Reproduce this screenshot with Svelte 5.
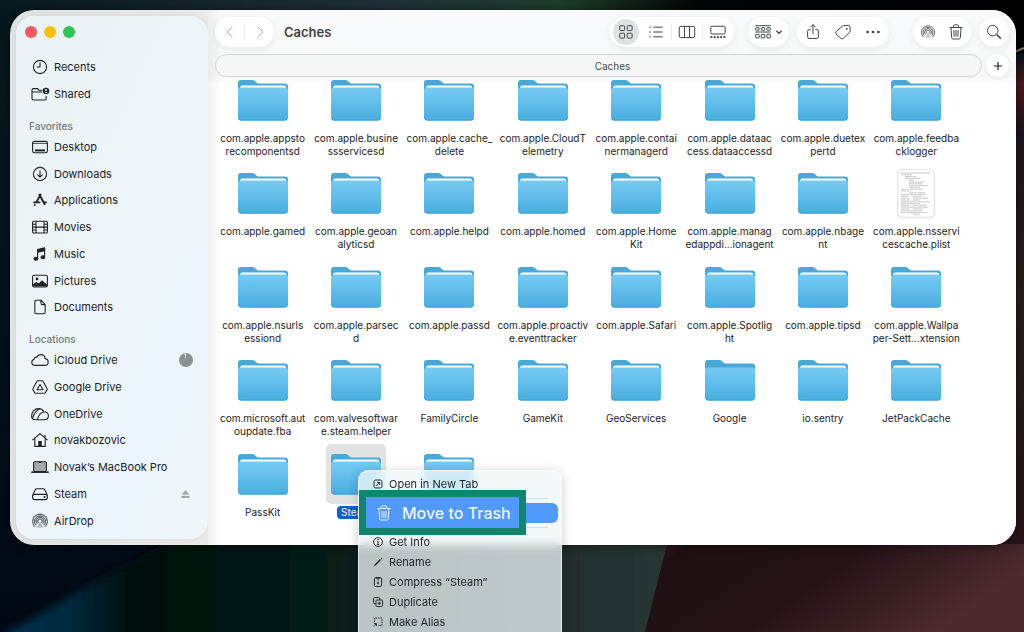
<script>
  const sections = [
    {
      title: "",
      items: [
        { icon: "clock", label: "Recents" },
        { icon: "shared", label: "Shared" },
      ],
    },
    {
      title: "Favorites",
      items: [
        { icon: "desktop", label: "Desktop" },
        { icon: "download", label: "Downloads" },
        { icon: "apps", label: "Applications" },
        { icon: "film", label: "Movies" },
        { icon: "music", label: "Music" },
        { icon: "picture", label: "Pictures" },
        { icon: "document", label: "Documents" },
      ],
    },
    {
      title: "Locations",
      items: [
        { icon: "cloud", label: "iCloud Drive", extra: "progress" },
        { icon: "gdrive", label: "Google Drive" },
        { icon: "onedrive", label: "OneDrive" },
        { icon: "home", label: "novakbozovic" },
        { icon: "laptop", label: "Novak’s MacBook Pro" },
        { icon: "disk", label: "Steam", extra: "eject" },
        { icon: "airdrop", label: "AirDrop" },
      ],
    },
  ];

  // \n marks where Finder breaks a long name
  const names = [
    "com.apple.appsto\nrecomponentsd",
    "com.apple.busine\nssservicesd",
    "com.apple.cache_\ndelete",
    "com.apple.CloudT\nelemetry",
    "com.apple.contai\nnermanagerd",
    "com.apple.dataac\ncess.dataaccessd",
    "com.apple.duetex\npertd",
    "com.apple.feedba\ncklogger",
    "com.apple.gamed",
    "com.apple.geoan\nalyticsd",
    "com.apple.helpd",
    "com.apple.homed",
    "com.apple.Home\nKit",
    "com.apple.manag\nedappdi...ionagent",
    "com.apple.nbage\nnt",
    "com.apple.nsservi\ncescache.plist",
    "com.apple.nsurls\nessiond",
    "com.apple.parsec\nd",
    "com.apple.passd",
    "com.apple.proactiv\ne.eventtracker",
    "com.apple.Safari",
    "com.apple.Spotlig\nht",
    "com.apple.tipsd",
    "com.apple.Wallpa\nper-Sett...xtension",
    "com.microsoft.aut\noupdate.fba",
    "com.valvesoftwar\ne.steam.helper",
    "FamilyCircle",
    "GameKit",
    "GeoServices",
    "Google",
    "io.sentry",
    "JetPackCache",
    "PassKit",
    "Steam",
    "",
  ];

  const menu = [
    { icon: "newtab", label: "Open in New Tab" },
    null,
    { active: true },
    null,
    { icon: "info", label: "Get Info" },
    { icon: "pencil", label: "Rename" },
    { icon: "zip", label: "Compress “Steam”" },
    { icon: "duplicate", label: "Duplicate" },
    { icon: "alias", label: "Make Alias" },
  ];

  // all icons are drawn on a 20x20 canvas
  const icons = {
    clock: '<circle cx="10" cy="10" r="6.6"/><path d="M10 5.6V10H6.8"/>',
    shared:
      '<path d="M12.2 6.2H9L7.6 4.6H3.6Q2 4.6 2 6.2V14.6Q2 16 3.6 16H14.6Q16.2 16 16.2 14.4V12M2 8H12"/><circle cx="16" cy="7" r="3.3" fill="currentColor" stroke="none"/><circle cx="16" cy="6" r="1" fill="#fff" stroke="none"/><path d="M14.4 8.9Q16 7 17.6 8.9Z" fill="#fff" stroke="none"/>',
    desktop:
      '<rect x="2.6" y="4.4" width="14.8" height="11.4" rx="1.8"/><path d="M3 6.4H17" stroke-width=".8"/><path d="M5 13.4H15" stroke-width="2"/>',
    download: '<circle cx="10" cy="10" r="6.6"/><path d="M10 6.4V13M7.4 10.6L10 13.2L12.6 10.6"/>',
    apps:
      '<g stroke-width="1.9"><path d="M9 4L15 14.8M11 4L6.2 12.4"/><path d="M3.4 12.4H10.4M13.4 12.4H16.8"/><path d="M5.2 14.2L4.4 15.6"/></g>',
    film:
      '<rect x="2.6" y="4.2" width="14.8" height="11.8" rx="1.2"/><path d="M6 4.2V16M14 4.2V16M6 10.1H14M2.6 7.2H6M2.6 10.1H6M2.6 13H6M14 7.2H17.4M14 10.1H17.4M14 13H17.4"/>',
    music:
      '<path d="M7.6 14.4V6.2L14.6 4.4V12.8"/><path d="M7.6 5.6L14.6 3.9V6.6L7.6 8.3Z" fill="currentColor"/><ellipse cx="5.9" cy="14.8" rx="1.9" ry="1.5" fill="currentColor"/><ellipse cx="12.9" cy="13.2" rx="1.9" ry="1.5" fill="currentColor"/>',
    picture:
      '<rect x="2.6" y="4.2" width="14.8" height="11.8" rx="1.6"/><circle cx="7" cy="8" r="1.4" fill="currentColor" stroke="none"/><path d="M3 15.6V13.4L6.4 10.8L8.6 12.4L12 9.2L17 13.4V15.6Z" fill="currentColor" stroke="none"/>',
    document: '<path d="M11 3.2H6.6Q4.8 3.2 4.8 5V15Q4.8 16.8 6.6 16.8H13.4Q15.2 16.8 15.2 15V7.6L11 3.2V6.2Q11 7.6 12.4 7.6H15.2"/>',
    cloud:
      '<path d="M5.4 15.4C3.2 15.4 1.8 14 1.8 12.2C1.8 10.6 2.8 9.6 4.2 9.2C4.2 7.6 5.6 6.8 6.8 7.2C7.6 5.4 9 4.6 10.8 4.6C13.2 4.6 15 6.4 15.2 8.6C17 8.8 18.2 10.2 18.2 12C18.2 14 16.8 15.4 14.8 15.4Z"/>',
    gdrive:
      '<path d="M8 3.8H12Q12.8 3.8 13.2 4.6L17 11.4Q17.4 12.2 17 12.9L15.4 15.5Q15 16.2 14.2 16.2H5.8Q5 16.2 4.6 15.5L3 12.9Q2.6 12.2 3 11.4L6.8 4.6Q7.2 3.8 8 3.8Z"/><path d="M10 7.6L13 12.8H7Z"/>',
    onedrive:
      '<path d="M5.6 15.8C3.2 15.8 1.6 14.2 1.6 12C1.6 8 4.4 4.6 8.6 4.6C11 4.6 13 5.8 14 7.8C16.6 8 18.4 9.6 18.4 11.8C18.4 14.2 16.8 15.8 14.4 15.8Z"/><path d="M2.6 14C4.2 9.4 6.4 6.4 9.6 4.8M7.4 15.6C8.6 11 11 8.4 14 7.8"/>',
    home: '<path d="M2.4 10.2L10 3.6L17.6 10.2M4.8 8.6V16.4H15.2V8.6M15 4.8V7.4"/><rect x="8.2" y="11" width="3.6" height="5.4" fill="currentColor" stroke="none"/>',
    laptop: '<rect x="3.6" y="4.8" width="12.8" height="9.8" rx="1" fill="#a4a9ab"/><path d="M1.2 15.2H18.8" stroke-width="1.5"/><path d="M9 5.4H11"/>',
    disk: '<path d="M2.8 11.2L5.2 5.8Q5.7 4.8 6.8 4.8H13.2Q14.3 4.8 14.8 5.8L17.2 11.2"/><rect x="2.6" y="10.4" width="14.8" height="5.2" rx="2"/><circle cx="14.6" cy="13" r=".5" fill="currentColor"/>',
    airdrop:
      '<g stroke-width=".9"><path d="M5 15.7A7.3 7.3 0 1 1 15 15.7"/><path d="M6.1 14.2A5.5 5.5 0 1 1 13.9 14.2"/><path d="M7.3 12.8A3.8 3.8 0 1 1 12.7 12.8"/><path d="M8.6 11.6A2.1 2.1 0 1 1 11.4 11.6"/></g><path d="M10 10.4L6.8 16.4H13.2Z" fill="currentColor" stroke="none" opacity=".3"/>',
    back: '<path d="M12.4 4.6L6.8 10L12.4 15.4"/>',
    forward: '<path d="M7.6 4.6L13.2 10L7.6 15.4"/>',
    grid: '<rect x="3" y="3" width="5.4" height="5.4" rx="1"/><rect x="11.4" y="3" width="5.4" height="5.4" rx="1"/><rect x="3" y="11.4" width="5.4" height="5.4" rx="1"/><rect x="11.4" y="11.4" width="5.4" height="5.4" rx="1"/>',
    list: '<path d="M7 4.6H17.4M7 10H17.4M7 15.4H17.4"/><path d="M2.6 4.6H4M2.6 10H4M2.6 15.4H4" stroke-width="1.6"/>',
    columns: '<rect x="1.4" y="3.8" width="17.2" height="12.4" rx="1.8"/><path d="M7.2 3.8V16.2M12.8 3.8V16.2"/>',
    gallery: '<rect x="2" y="3.6" width="16" height="8.6" rx="1.6"/><path d="M1.6 15.6H18.4" stroke-width="2" stroke-dasharray="2.2 1.4"/>',
    group:
      '<path d="M1.4 3H18.6M1.4 10H18.6"/><rect x="1.9" y="5.2" width="3.8" height="2.8" rx=".6"/><rect x="8.1" y="5.2" width="3.8" height="2.8" rx=".6"/><rect x="14.3" y="5.2" width="3.8" height="2.8" rx=".6"/><rect x="1.9" y="12.6" width="3.8" height="4" rx=".6"/><rect x="8.1" y="12.6" width="3.8" height="4" rx=".6"/><rect x="14.3" y="12.6" width="3.8" height="4" rx=".6"/>',
    share: '<path d="M7.4 7.4H5.8Q4 7.4 4 9.2V15.4Q4 17.2 5.8 17.2H14.2Q16 17.2 16 15.4V9.2Q16 7.4 14.2 7.4H12.6M10 12.4V1.8M7 4.8L10 1.8L13 4.8"/>',
    tag: '<path d="M10.6 3L16 2.6Q17.4 2.6 17.6 4L18 8.4Q18 9.6 17.2 10.4L10.4 17Q9 18.2 7.6 17L2.4 12.2Q1.2 10.8 2.4 9.4L9 3.8Q9.8 3.1 10.6 3Z"/><circle cx="14.2" cy="6.6" r=".6" fill="currentColor"/>',
    dots: '<g fill="currentColor" stroke="none"><circle cx="4" cy="10" r="1.5"/><circle cx="10" cy="10" r="1.5"/><circle cx="16" cy="10" r="1.5"/></g>',
    trash:
      '<path d="M2.8 5H17.2M7.2 4.8V3.4Q7.2 2 8.6 2H11.4Q12.8 2 12.8 3.4V4.8M4.4 5.2L5.2 16.2Q5.3 17.8 6.8 17.8H13.2Q14.7 17.8 14.8 16.2L15.6 5.2M7.6 7.8L7.9 15.2M10 7.8V15.2M12.4 7.8L12.1 15.2"/>',
    search: '<circle cx="8.6" cy="8.4" r="5.8"/><path d="M13 12.8L17.6 17.4" stroke-width="1.7"/>',
    plus: '<path d="M10 3.2V16.8M3.2 10H16.8"/>',
    newtab: '<rect x="3.4" y="3.4" width="13.2" height="13.2" rx="2.6"/><path d="M7 13L12.4 7.6M8.4 7.2H12.8V11.6"/>',
    info: '<circle cx="10" cy="10" r="7.4"/><path d="M10 9V14.2M8.6 9H10M8.4 14.2H11.6"/><circle cx="10" cy="6.2" r=".6" fill="currentColor"/>',
    pencil: '<path d="M4.8 15.4L14.2 6" stroke-width="2.4"/><path d="M15.2 5L16.4 3.8" stroke-width="2.4"/><path d="M3 17.2L4.8 15.4"/>',
    zip: '<rect x="4" y="3" width="12" height="14.4" rx="1.6"/><path d="M6.4 3H13.6" stroke-width="2.4"/><path d="M10 5V12" stroke-dasharray="1.6 1"/><path d="M10 11V13.6" stroke-width="2.4"/>',
    duplicate: '<path d="M6.4 13H4.6Q2.6 13 2.6 11V4.6Q2.6 2.6 4.6 2.6H11Q13 2.6 13 4.6V6.4"/><rect x="6.6" y="6.6" width="11" height="11" rx="2"/><path d="M12.1 9.4V14.8M9.4 12.1H14.8"/>',
    alias: '<path d="M4 10V3.4H16.6V16H10" stroke-dasharray="2.6 1.6"/><path d="M2.6 17.4L7 13M3.6 12.6H7.4V16.4"/>',
  };

  let selected = $state("Steam");
  let view = $state("grid");
</script>

{#snippet icon(name)}
  <svg class="icon" viewBox="0 0 20 20" aria-hidden="true">{@html icons[name]}</svg>
{/snippet}

{#snippet folder(full)}
  <svg class="thumb" viewBox="0 0 60 60" aria-hidden="true">
    <path d="M5 13Q5 10 8 10H19Q21 10 22.4 11.4L23.4 12.4Q24.4 13.4 26 13.4H52Q55 13.4 55 16.4V30H5Z" fill="#48a9d8" />
    {#if !full}
      <path d="M7 19Q7 15.6 9.4 15.6H50.6Q53.4 15.6 53.4 19V24H7Z" fill="#fff" />
    {/if}
    <path d="M5 20.4Q5 17.6 8 17.6H52Q55 17.6 55 20.4V47.6Q55 50.6 52 50.6H8Q5 50.6 5 47.6Z" fill="url(#front)" />
    <path d="M6 49Q6.8 50.2 8.4 50.2H51.6Q53.2 50.2 54 49" fill="none" stroke="#3a9ccb" stroke-width=".8" />
  </svg>
{/snippet}

{#snippet plist()}
  <svg class="thumb" viewBox="0 0 60 60" aria-hidden="true">
    <rect x="11.8" y="6.8" width="36.6" height="48" rx="4" fill="none" stroke="#efefef" stroke-width="2" />
    <rect x="12" y="6.6" width="36.2" height="47.4" rx="4" fill="#fff" stroke="#dcdcdc" stroke-width=".7" />
    <g stroke="#b0b0b0" stroke-width=".7" stroke-dasharray="5 .4 3 .3 7 .4">
      <path d="M15 10H44M15 11.8H26M19 13.6H30M19 15.4H34M23 17.2H28M23 19H38M23 20.8H36M23 22.6H42M23 24.4H34" />
      <path d="M15 26.2H22M23 26.2H37M15 28H25M23 29.8H40M15 31.6H40M15 33.4H22M27 33.4H36M15 35.2H24M27 35.2H42" />
      <path d="M15 37H24M27 37H34M15 38.8H44M15 40.6H34M15 42.4H24M27 42.4H40M15 44.2H42M15 46H24M27 46H38M15 47.8H36M15 49.6H42M27 51.2H34" />
    </g>
  </svg>
{/snippet}

<svg class="defs" width="0" height="0" aria-hidden="true">
  <linearGradient id="front" x1="0" y1="0" x2="0" y2="1">
    <stop offset="0" stop-color="#76cbf3" />
    <stop offset="1" stop-color="#49ade0" />
  </linearGradient>
</svg>

<main class="desktop">
  <svg class="wallpaper" viewBox="0 0 1024 632" preserveAspectRatio="none" aria-hidden="true">
    <defs>
      <linearGradient id="top">
        <stop offset="0" stop-color="#06191e" />
        <stop offset=".38" stop-color="#21323a" />
        <stop offset=".55" stop-color="#1f3e2d" />
        <stop offset=".68" stop-color="#020604" />
        <stop offset="1" stop-color="#000" />
      </linearGradient>
      <linearGradient id="left" x1="0" y1="0" x2="0" y2="1">
        <stop offset="0" stop-color="#06191e" />
        <stop offset=".5" stop-color="#03131b" />
        <stop offset="1" stop-color="#010814" />
      </linearGradient>
      <linearGradient id="ground" gradientUnits="userSpaceOnUse" x1="20" y1="0" x2="670" y2="0">
        <stop offset="0" stop-color="#05304b" />
        <stop offset=".08" stop-color="#05293d" />
        <stop offset=".17" stop-color="#020f0d" />
        <stop offset=".45" stop-color="#051b17" />
        <stop offset=".83" stop-color="#202e2d" />
        <stop offset="1" stop-color="#263635" />
      </linearGradient>
      <linearGradient id="wine" x1="0" y1="0" x2="1" y2=".35">
        <stop offset="0" stop-color="#4b1421" />
        <stop offset=".06" stop-color="#3f1420" />
        <stop offset=".12" stop-color="#1f0f13" />
        <stop offset=".55" stop-color="#251316" />
        <stop offset="1" stop-color="#4d2a2e" />
      </linearGradient>
      <linearGradient id="side" x1="0" y1="0" x2="0" y2="1">
        <stop offset="0" stop-color="#04161b" />
        <stop offset=".06" stop-color="#4a1820" />
        <stop offset=".16" stop-color="#20141c" />
        <stop offset=".5" stop-color="#2c1d1d" />
        <stop offset="1" stop-color="#271316" />
      </linearGradient>
      <filter id="soft">
        <feGaussianBlur stdDeviation="4" />
      </filter>
    </defs>
    <rect width="1024" height="60" fill="url(#top)" />
    <rect y="10" width="200" height="622" fill="url(#left)" />
    <path d="M187 530H680V660H-40Z" fill="url(#ground)" filter="url(#soft)" />
    <path d="M668 540H1024V632H645Z" fill="url(#wine)" />
    <rect x="1000" y="54" width="24" height="490" fill="url(#side)" />
    <path d="M1010 54L1024 48" stroke="#7b7a6a" stroke-width="2" />
  </svg>

  <section class="window" aria-label="Caches">
    <aside class="sidebar">
      <div class="lights">
        <button class="red" aria-label="Close"></button>
        <button class="yellow" aria-label="Minimize"></button>
        <button class="green" aria-label="Zoom"></button>
      </div>
      <nav>
        {#each sections as section}
          <div class="section" style:flex-grow={section.items.length}>
            {#if section.title}<h2>{section.title}</h2>{/if}
            <ul>
              {#each section.items as item}
                <li>
                  <a href="#{item.icon}">
                    {@render icon(item.icon)}
                    <span>{item.label}</span>
                    {#if item.extra === "progress"}
                      <svg class="extra" viewBox="0 0 16 16" aria-hidden="true">
                        <circle cx="8" cy="8" r="7" fill="#8b9193" />
                        <path d="M8 8V1.6A6.4 6.4 0 0 0 6.6 1.8Z" fill="#fff" />
                      </svg>
                    {:else if item.extra === "eject"}
                      <svg class="extra" viewBox="0 0 16 16" aria-hidden="true">
                        <path d="M7.5 4L11.5 8.8H3.5ZM3.5 10H11.5V12H3.5Z" fill="#a3a9ab" />
                      </svg>
                    {/if}
                  </a>
                </li>
              {/each}
            </ul>
          </div>
        {/each}
      </nav>
    </aside>

    <div class="content">
      <header class="toolbar">
        <div class="pill history">
          <button aria-label="Back">{@render icon("back")}</button>
          <i></i>
          <button aria-label="Forward">{@render icon("forward")}</button>
        </div>
        <h1>Caches</h1>
        <div class="pill views">
          <button class:on={view === "grid"} aria-label="Icons" onclick={() => (view = "grid")}>{@render icon("grid")}</button>
          <button class:on={view === "list"} aria-label="List" onclick={() => (view = "list")}>{@render icon("list")}</button>
          <i></i>
          <button class:on={view === "columns"} aria-label="Columns" onclick={() => (view = "columns")}>{@render icon("columns")}</button>
          <i></i>
          <button class:on={view === "gallery"} aria-label="Gallery" onclick={() => (view = "gallery")}>{@render icon("gallery")}</button>
        </div>
        <div class="pill">
          <button class="group" aria-label="Group">
            {@render icon("group")}
            <svg class="chevron" viewBox="0 0 8 8" aria-hidden="true"><path d="M1.4 2.8L4 5.4L6.6 2.8" /></svg>
          </button>
        </div>
        <div class="pill actions">
          <button aria-label="Share">{@render icon("share")}</button>
          <button aria-label="Tags">{@render icon("tag")}</button>
          <button aria-label="More">{@render icon("dots")}</button>
        </div>
        <div class="pill pair">
          <button aria-label="AirDrop">{@render icon("airdrop")}</button>
          <button aria-label="Trash">{@render icon("trash")}</button>
        </div>
        <div class="pill round">
          <button aria-label="Search">{@render icon("search")}</button>
        </div>
      </header>

      <div class="tabs">
        <button class="tab">Caches</button>
        <button class="add" aria-label="New tab">{@render icon("plus")}</button>
      </div>

      <div class="files">
        {#each names as name}
          <button class="file" class:selected={selected === name} onclick={() => (selected = name)}>
            <span class="frame">
              {#if name.endsWith(".plist")}
                {@render plist()}
              {:else}
                {@render folder(name === "Google")}
              {/if}
            </span>
            <span class="name">{name}</span>
          </button>
        {/each}
      </div>
    </div>
  </section>

  <div class="menu">
    {#each menu as entry}
      {#if entry?.active}
        <div class="entry active"></div>
      {:else if entry}
        <button class="entry">
          {@render icon(entry.icon)}
          <span>{entry.label}</span>
        </button>
      {:else}
        <hr />
      {/if}
    {/each}
  </div>

  <!-- label of the active entry, enlarged -->
  <button class="callout">
    {@render icon("trash")}
    <span>Move to Trash</span>
  </button>
</main>

<style>
  :global(body) {
    margin: 0;
    background: #06191e;
  }

  .desktop {
    position: relative;
    display: flex;
    box-sizing: border-box;
    min-height: 100vh;
    padding: 10px 8px 87px 10px;
    overflow: hidden;
    font-family: Inter, "Liberation Sans", sans-serif;
    font-size: 11px;
    color: #1d2326;
  }

  .desktop * {
    box-sizing: border-box;
  }

  .defs {
    position: absolute;
  }

  .wallpaper {
    position: absolute;
    inset: 0;
    width: 100%;
    height: 100%;
  }

  button {
    margin: 0;
    padding: 0;
    border: 0;
    background: none;
    font: inherit;
    color: inherit;
  }

  .icon {
    flex: none;
    width: 20px;
    height: 20px;
    fill: none;
    stroke: currentColor;
    stroke-width: 1.1;
    stroke-linejoin: round;
  }

  .window {
    position: relative;
    display: flex;
    flex: 1;
    min-width: 0;
    padding: 6px 0 6px 6px;
    border-radius: 24px;
    background: linear-gradient(90deg, #e3e4e5 0, #ececec 208px, #fff 240px);
    box-shadow: 0 0 12px rgba(0, 0, 0, 0.5);
  }

  /* sidebar */
  .sidebar {
    display: flex;
    flex: none;
    flex-direction: column;
    width: 192px;
    padding-bottom: 5px;
    border-radius: 18px;
    background: linear-gradient(115deg, #e9f2f5, #eef5f8 45%, #ebf5fc 75%, #eff6f8);
    box-shadow: 0 0 8px rgba(0, 0, 0, 0.08);
  }

  .lights {
    display: flex;
    gap: 7px;
    height: 38px;
    padding: 10px 9px;
  }

  .lights button {
    width: 12px;
    height: 12px;
    border-radius: 50%;
  }

  .red {
    background: #fb5560;
  }

  .yellow {
    background: #fac104;
  }

  .green {
    background: #2fc454;
  }

  nav {
    display: flex;
    flex: 1;
    flex-direction: column;
  }

  .section {
    display: flex;
    flex-direction: column;
  }

  h2 {
    height: 26px;
    margin: 0;
    padding: 12px 13px 0;
    font-size: 10px;
    font-weight: 500;
    line-height: 13px;
    color: #737b7f;
  }

  ul {
    display: grid;
    flex: 1;
    grid-auto-rows: minmax(26px, 1fr);
    margin: 0;
    padding: 0;
    list-style: none;
  }

  li a {
    display: flex;
    align-items: center;
    gap: 4px;
    height: 100%;
    padding: 0 14px;
    color: inherit;
    text-decoration: none;
  }

  li span {
    flex: 1;
    white-space: nowrap;
  }

  .extra {
    width: 16px;
    height: 16px;
  }

  /* toolbar */
  .content {
    display: flex;
    flex: 1;
    flex-direction: column;
    min-width: 0;
    margin: -6px 0;
    border-radius: 0 24px 24px 0;
    background:
      linear-gradient(90deg, rgba(0, 0, 0, 0.05), rgba(0, 0, 0, 0) 14px),
      linear-gradient(#f9fbfc, #f7f7f7 66px, #fff 74px);
  }

  .toolbar {
    display: flex;
    align-items: center;
    gap: 8px;
    padding: 7px 7px 0;
    color: #3f4346;
  }

  h1 {
    flex: 1;
    margin: 0;
    padding-left: 2px;
    font-size: 13px;
    font-weight: 600;
  }

  .pill {
    display: flex;
    align-items: center;
    height: 30px;
    padding: 0 1px;
    border-radius: 15px;
    background: #fff;
    box-shadow: 0 2px 8px rgba(0, 0, 0, 0.07);
  }

  .pill button {
    display: flex;
    align-items: center;
    justify-content: center;
    width: 30px;
    height: 26px;
    border-radius: 13px;
  }

  .pill .icon {
    width: 18px;
    height: 18px;
  }

  .pill i {
    width: 1px;
    height: 16px;
    background: #e9e9e9;
  }

  .pill .on {
    width: 26px;
    margin: 0 2px;
    background: #e0e1e2;
  }

  .history {
    padding: 0;
    color: #a9acae;
  }

  .history button {
    width: 29px;
  }

  .views {
    margin-right: 6px;
  }

  .actions {
    margin-right: 16px;
  }

  .pill .group {
    gap: 3px;
    width: 39px;
  }

  .chevron {
    width: 8px;
    height: 8px;
    fill: none;
    stroke: currentColor;
    stroke-width: 1.3;
  }

  .pair button {
    width: 28px;
  }

  .round {
    padding: 0;
  }

  .tabs {
    display: flex;
    gap: 4px;
    padding: 7px 7px 0;
  }

  .tab {
    flex: 1;
    height: 23px;
    padding-left: 28px;
    border: 1px solid #d3d4d5;
    border-radius: 12px;
    background: #f6f6f6;
    font-size: 10px;
    color: #4b4e50;
  }

  .add {
    display: flex;
    align-items: center;
    justify-content: center;
    width: 23px;
    height: 23px;
    border-radius: 12px;
    background: #fff;
    box-shadow: 0 1px 5px rgba(0, 0, 0, 0.08);
  }

  .add .icon {
    width: 12px;
    height: 12px;
    stroke-width: 2;
  }

  /* icon view, its first row slides up under the tab bar */
  .files {
    display: grid;
    flex: 1;
    grid-template-columns: repeat(8, minmax(0, 1fr));
    grid-auto-rows: minmax(92px, 1fr);
    margin-top: -7px;
    padding: 0 53px 8px 8px;
  }

  .file {
    display: flex;
    flex-direction: column;
    align-items: center;
    gap: 2px;
  }

  .frame {
    width: 60px;
    height: 60px;
    border-radius: 5px;
  }

  .thumb {
    display: block;
    width: 60px;
    height: 60px;
  }

  .name {
    padding: 0 4px;
    border-radius: 4px;
    font-size: 10px;
    line-height: 13px;
    white-space: pre;
  }

  .selected .frame {
    background: #e1e2e2;
  }

  .selected .name {
    background: #0a5fd6;
    color: #fff;
  }

  /* context menu */
  .menu {
    position: absolute;
    top: 470px;
    left: 358px;
    width: 204px;
    padding: 3px 3px 12px;
    border: 1px solid rgba(255, 255, 255, 0.6);
    border-radius: 10px;
    background: rgba(240, 247, 250, 0.77);
    box-shadow: 0 2px 12px rgba(0, 0, 0, 0.2);
    backdrop-filter: blur(5px);
  }

  .entry {
    display: flex;
    align-items: center;
    gap: 5px;
    width: 100%;
    height: 20px;
    padding: 0 10px;
    border-radius: 6px;
  }

  .entry .icon {
    width: 12px;
    height: 12px;
    stroke-width: 1.6;
  }

  .entry.active {
    background: #5199fb;
  }

  hr {
    height: 1px;
    margin: 4px 10px;
    border: 0;
    background: #d5dee1;
  }

  .callout {
    position: absolute;
    top: 490px;
    left: 359px;
    display: flex;
    align-items: center;
    gap: 9px;
    width: 167px;
    height: 45px;
    padding: 0 9px;
    border: 7px solid #10866c;
    background: #5199fb;
    font-size: 16px;
    font-weight: 500;
    color: #eef5ff;
    white-space: nowrap;
  }

  .callout .icon {
    width: 18px;
    height: 18px;
  }
</style>
